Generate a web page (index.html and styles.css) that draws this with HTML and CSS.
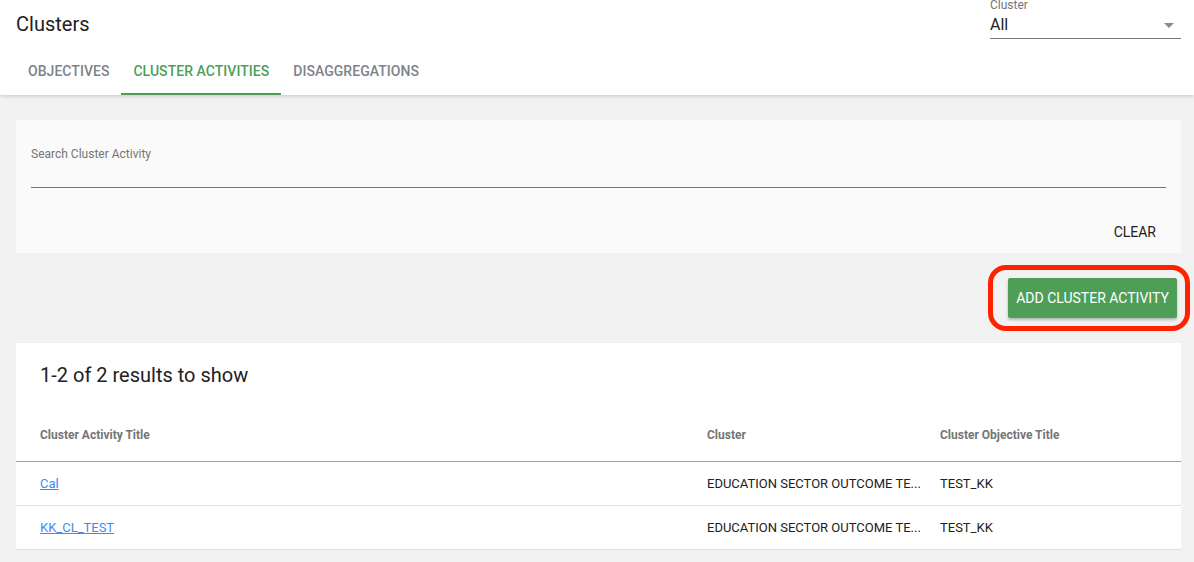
FILE: index.html
```html
<!DOCTYPE html>
<html>
<head>
<meta charset="utf-8">
<link rel="stylesheet" href="styles.css">
</head>
<body>
<header class="header">
  <div class="header-top">
    <h1 class="title">Clusters</h1>
    <div class="select">
      <div class="select-label">Cluster</div>
      <div class="select-value"><span>All</span><span class="caret"></span></div>
    </div>
  </div>
  <nav class="tabs">
    <div class="tab">OBJECTIVES</div>
    <div class="tab active">CLUSTER ACTIVITIES</div>
    <div class="tab">DISAGGREGATIONS</div>
  </nav>
</header>
<main class="content">
  <section class="filter-card">
    <div class="field">
      <div class="field-label">Search Cluster Activity</div>
      <div class="field-line"></div>
    </div>
    <div class="filter-actions"><span class="clear">CLEAR</span></div>
  </section>
  <div class="add-row">
    <div class="highlight"><button class="add-btn">ADD CLUSTER ACTIVITY</button></div>
  </div>
  <section class="table-card">
    <h2 class="results">1-2 of 2 results to show</h2>
    <div class="row head">
      <div class="c1">Cluster Activity Title</div>
      <div class="c2">Cluster</div>
      <div class="c3">Cluster Objective Title</div>
    </div>
    <div class="row">
      <div class="c1"><a href="#">Cal</a></div>
      <div class="c2">EDUCATION SECTOR OUTCOME TE...</div>
      <div class="c3">TEST_KK</div>
    </div>
    <div class="row">
      <div class="c1"><a href="#">KK_CL_TEST</a></div>
      <div class="c2">EDUCATION SECTOR OUTCOME TE...</div>
      <div class="c3">TEST_KK</div>
    </div>
  </section>
</main>
</body>
</html>
```

FILE: styles.css
```css
* { box-sizing: border-box; }
html, body { margin: 0; padding: 0; }
body {
  font-family: Roboto, "Liberation Sans", sans-serif;
  background: #f2f2f2;
  color: #212121;
  width: 1194px;
  height: 562px;
  overflow: hidden;
}
.header {
  background: #fff;
  height: 95px;
  box-shadow: 0 1px 4px rgba(0,0,0,0.18);
  position: relative;
  z-index: 1;
}
.header-top {
  display: flex;
  justify-content: space-between;
  padding: 0 13px 0 16px;
  height: 48px;
}
.title {
  margin: 0;
  font-size: 20px;
  font-weight: 400;
  line-height: 24px;
  padding-top: 12px;
  color: #212121;
}
.select {
  width: 191px;
}
.select-label {
  font-size: 12px;
  line-height: 12px;
  color: #757575;
  margin-top: -1px;
}
.select-value {
  display: flex;
  justify-content: space-between;
  align-items: center;
  font-size: 16px;
  line-height: 20px;
  padding: 4px 0 3px;
  border-bottom: 1px solid #757575;
  color: #212121;
}
.caret {
  width: 0; height: 0;
  border-left: 5px solid transparent;
  border-right: 5px solid transparent;
  border-top: 5px solid #8a8a8a;
  margin-right: 7px;
}
.tabs {
  display: flex;
  padding-left: 16px;
  height: 47px;
}
.tab {
  padding: 0 12px;
  font-size: 14px;
  font-weight: 500;
  color: #7c8389;
  line-height: 47px;
  height: 47px;
  border-bottom: 2px solid transparent;
  letter-spacing: 0.04px;
}
.tab.active {
  color: #4c9f58;
  border-bottom-color: #4c9f58;
}
.content {
  padding: 25px 13px 0 16px;
}
.filter-card {
  background: #fafafa;
  height: 133px;
  padding: 27px 15px 0 15px;
}
.field-label {
  font-size: 12px;
  color: #757575;
  line-height: 14px;
}
.field-line {
  height: 1px;
  background: #757575;
  margin-top: 26px;
}
.filter-actions {
  display: flex;
  justify-content: flex-end;
  padding-top: 36px;
}
.clear {
  font-size: 14px;
  color: #212121;
  padding-right: 10px;
  line-height: 16px;
}
.add-row {
  display: flex;
  justify-content: flex-end;
  padding: 12px 0 12px;
  margin-right: -9px;
}
.highlight {
  border: 5px solid #ff2200;
  border-radius: 18px;
  padding: 8px 8px 8px 15px;
}
.add-btn {
  background: #4f9e57;
  color: #fff;
  border: none;
  border-radius: 2px;
  height: 40px;
  width: 169px;
  font-family: Roboto, "Liberation Sans", sans-serif;
  font-size: 14px;
  font-weight: 400;
  box-shadow: 0 2px 3px rgba(0,0,0,0.25);
  padding: 0;
}
.table-card {
  background: #fff;
  height: 207px;
}
.results {
  margin: 0;
  font-size: 20px;
  font-weight: 400;
  line-height: 24px;
  padding: 20px 24px 0;
  color: #212121;
}
.row {
  display: flex;
  align-items: center;
  height: 44px;
  border-bottom: 1px solid #e0e0e0;
  font-size: 13px;
  color: #212121;
}
.row.head {
  height: 75px;
  padding-top: 22px;
  border-bottom-color: #9e9e9e;
  font-size: 12px;
  font-weight: 700;
  color: #757575;
}
.c1 { width: 691px; padding-left: 24px; }
.c2 { width: 233px; }
.c3 { flex: 1; }
.row a { color: #3d8af7; text-decoration: underline; }
```
